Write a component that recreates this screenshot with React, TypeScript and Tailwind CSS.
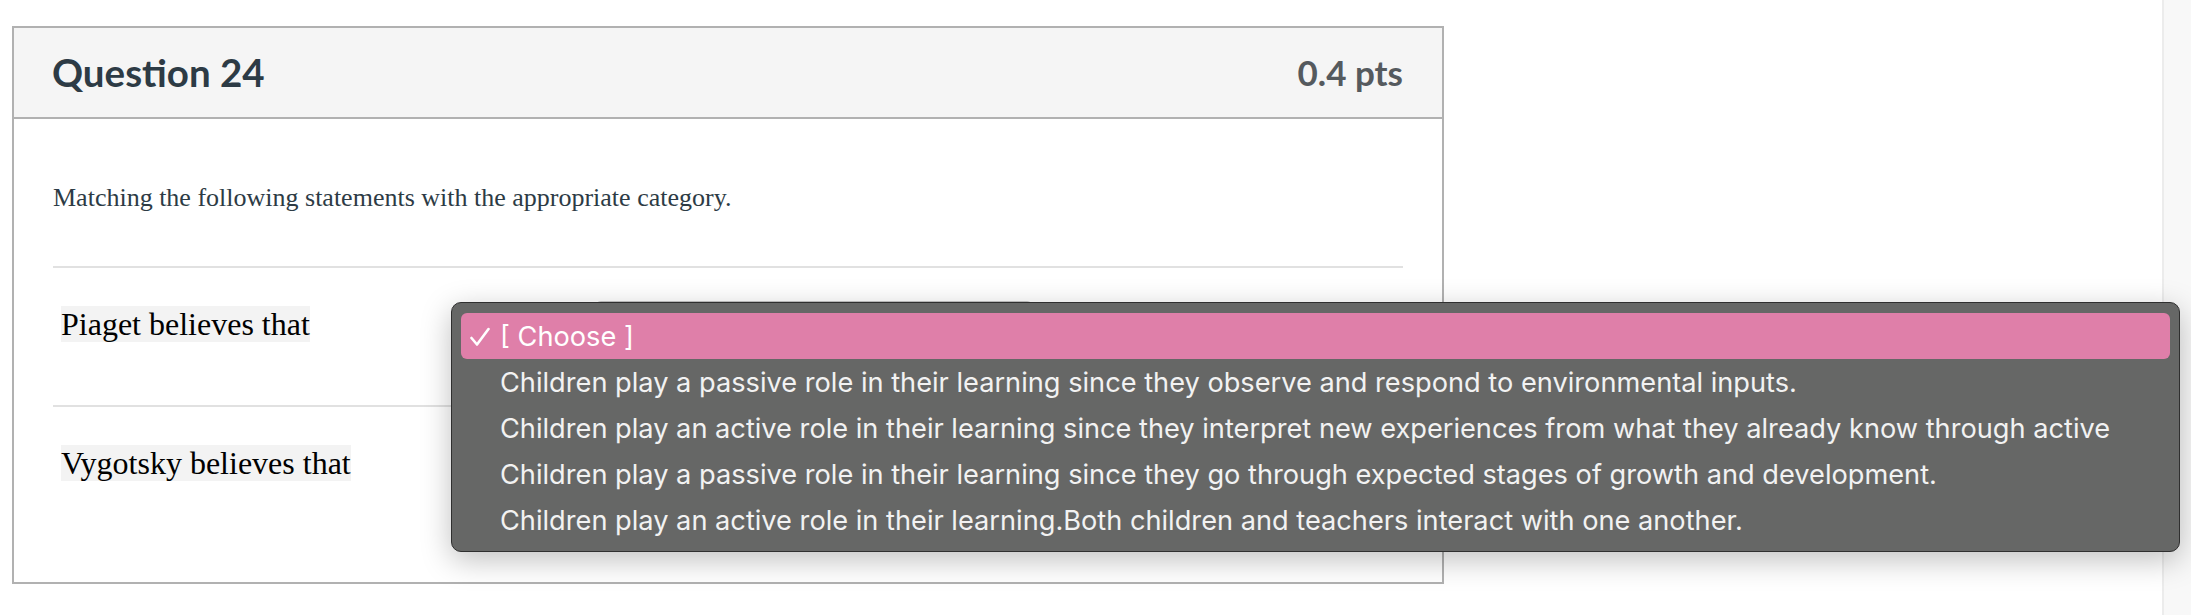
import React from 'react';

const opciones = [
  'Children play a passive role in their learning since they observe and respond to environmental inputs.',
  'Children play an active role in their learning since they interpret new experiences from what they already know through active',
  'Children play a passive role in their learning since they go through expected stages of growth and development.',
  'Children play an active role in their learning.Both children and teachers interact with one another.',
];

const lato = { fontFamily: 'Lato, "Open Sans", sans-serif' };

export default function App() {
  return (
    <div className="relative flex h-[615px] w-[2191px] overflow-hidden bg-white">
      {/* Main column */}
      <div className="w-[2162px] pl-[12px] pt-[26px]">
        <div className="w-[1432px] border-2 border-[#b1b1b1] bg-white">
          {/* Header */}
          <div
            className="flex h-[91px] items-center justify-between border-b-2 border-[#b1b1b1] bg-[#f5f5f5] pl-[38px] pr-[39px]"
            style={lato}
          >
            <h2 className="text-[38.5px] font-bold text-[#2d3b45]">Question 24</h2>
            <span className="text-[35px] font-bold text-[#555a5e]">0.4 pts</span>
          </div>

          {/* Body */}
          <div className="px-[39px] pt-[62px] pb-[23px]">
            <p className="mb-[51px] font-['Liberation_Serif',serif] text-[26px] leading-[34px] text-[#2d3b45]">
              Matching the following statements with the appropriate category.
            </p>

            <div className="h-[141px] border-t-2 border-b-2 border-[#e1e1e1] pt-[37px]">
              <div className="flex items-start">
                <div className="w-[542px] pl-[8px] font-['Liberation_Serif',serif] text-[32px] leading-[38px] text-black">
                  <span className="bg-[#f3f3f3]">Piaget believes that</span>
                </div>
                <div className="-mt-[4px] h-[52px] w-[438px] rounded-[6px] border-2 border-[#c4c4c4] bg-white" />
              </div>
            </div>

            <div className="h-[152px] pt-[37px]">
              <div className="flex items-start">
                <div className="w-[542px] pl-[8px] font-['Liberation_Serif',serif] text-[32px] leading-[38px] text-black">
                  <span className="bg-[#f3f3f3]">Vygotsky believes that</span>
                </div>
                <div className="-mt-[4px] h-[52px] w-[438px] rounded-[6px] border-2 border-[#c4c4c4] bg-white" />
              </div>
            </div>
          </div>
        </div>
      </div>

      {/* Right strip */}
      <div className="flex-1 border-l-2 border-[#ececec] bg-[#f8f8f8]" />

      {/* Open select menu */}
      <div
        className="absolute left-[451px] top-[302px] w-[1729px] rounded-[10px] border border-[#2f2f2f] bg-[#666766] px-[9px] pt-[10px] pb-[8px] shadow-[0_8px_30px_rgba(0,0,0,0.25)]"
        style={{ fontFamily: 'Inter, "Noto Sans", sans-serif' }}
      >
        <div className="flex h-[46px] items-center rounded-[6px] bg-[#df7fa9] pl-[9px] pt-[3px] text-[27.2px] text-white">
          <span className="flex w-[30px] items-center">
            <svg width="20" height="20" viewBox="0 0 20 20" fill="none" className="-mt-[2px]">
              <path d="M1.5 11 L7 17.5 L18.5 2" stroke="white" strokeWidth="2.6" strokeLinecap="round" strokeLinejoin="round" />
            </svg>
          </span>
          <span>[ Choose ]</span>
        </div>
        {opciones.map((texto) => (
          <div
            key={texto}
            className="flex h-[46px] items-center whitespace-nowrap pl-[39px] pt-[3px] text-[27.2px] text-[#f2f2f2]"
          >
            {texto}
          </div>
        ))}
      </div>
    </div>
  );
}
